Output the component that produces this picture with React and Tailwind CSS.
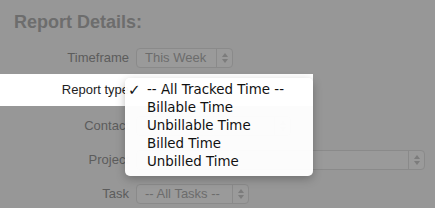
import React from "react";

function Arrows() {
    return (
        <svg width="8" height="12" viewBox="0 0 8 12">
            <path d="M4 1 L7 5 L1 5 Z" fill="#7c7c7c" />
            <path d="M4 11 L7 7 L1 7 Z" fill="#7c7c7c" />
        </svg>
    );
}

function GraySelect({ value, width }) {
    return (
        <div
            className="h-[20px] flex items-stretch rounded-[4px] border border-[#8a8a8a] bg-[#9a9a9a] text-[13px] text-[#6c6c6c]"
            style={{ width }}
        >
            <div className="flex-1 flex items-center pl-[8px] whitespace-nowrap overflow-hidden">{value}</div>
            <div className="w-[16px] flex items-center justify-center border-l border-[#8a8a8a]">
                <Arrows />
            </div>
        </div>
    );
}

function Row({ label, children, className }) {
    return (
        <div className={"flex items-center h-[20px] " + className}>
            <div className="w-[130px] pr-[1px] text-right text-[13px] text-[#5c5c5c] whitespace-nowrap">{label}</div>
            <div className="ml-[6px]">{children}</div>
        </div>
    );
}

const options = ["-- All Tracked Time --", "Billable Time", "Unbillable Time", "Billed Time", "Unbilled Time"];

export default function App() {
    return (
        <div className="w-[435px] h-[208px] bg-[#979797] overflow-hidden relative font-['Liberation_Sans',Arial,sans-serif]">
            <h2 className="pl-[14px] pt-[11px] text-[18px] leading-[22px] font-bold text-[#6d6d6d]">Report Details:</h2>

            <Row label="Timeframe" className="mt-[15px]">
                <GraySelect value="This Week" width={97} />
            </Row>

            <div className="mt-[6px] w-[313px] h-[32px] bg-white flex items-center">
                <div className="w-[130px] pr-[1px] text-right text-[13px] text-[#222] whitespace-nowrap">Report type</div>
            </div>

            <Row label="Contact" className="mt-[10px]">
                <GraySelect value="" width={155} />
            </Row>

            <Row label="Project" className="mt-[14px]">
                <GraySelect value="" width={289} />
            </Row>

            <Row label="Task" className="mt-[14px]">
                <GraySelect value="-- All Tasks --" width={113} />
            </Row>

            <div className="absolute left-[125px] top-[78px] w-[188px] h-[98px] rounded-[5px] bg-white/[0.97] shadow-[0_3px_10px_rgba(0,0,0,0.25)] pt-[3px] font-['DejaVu_Sans',sans-serif] text-[13.4px] text-[#111]">
                {options.map((o, i) => (
                    <div key={o} className="relative h-[18px] flex items-center pl-[22px] whitespace-nowrap">
                        {i === 0 && <span className="absolute left-[3px] text-[15px] font-bold">✓</span>}
                        {o}
                    </div>
                ))}
            </div>
        </div>
    );
}
